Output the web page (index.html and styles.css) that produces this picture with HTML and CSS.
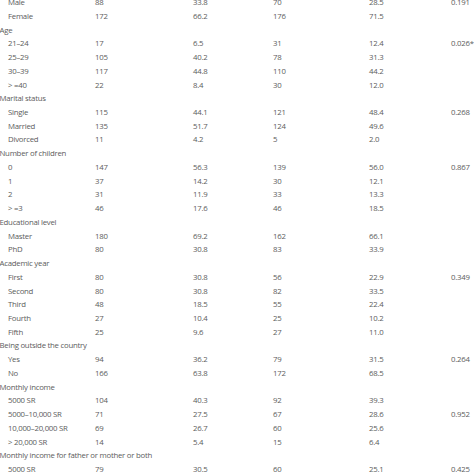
FILE: index.html
```html
<!DOCTYPE html>
<html>
<head>
<meta charset="utf-8">
<link rel="stylesheet" href="styles.css">
</head>
<body>
<div class="tbl">
  <div class="row"><span class="sub">Male</span><span>88</span><span>33.8</span><span>70</span><span>28.5</span><span>0.191</span></div>
  <div class="row"><span class="sub">Female</span><span>172</span><span>66.2</span><span>176</span><span>71.5</span><span></span></div>
  <div class="row cat"><span>Age</span></div>
  <div class="row"><span class="sub">21–24</span><span>17</span><span>6.5</span><span>31</span><span>12.4</span><span>0.026*</span></div>
  <div class="row"><span class="sub">25–29</span><span>105</span><span>40.2</span><span>78</span><span>31.3</span><span></span></div>
  <div class="row"><span class="sub">30–39</span><span>117</span><span>44.8</span><span>110</span><span>44.2</span><span></span></div>
  <div class="row"><span class="sub">&gt; =40</span><span>22</span><span>8.4</span><span>30</span><span>12.0</span><span></span></div>
  <div class="row cat"><span>Marital status</span></div>
  <div class="row"><span class="sub">Single</span><span>115</span><span>44.1</span><span>121</span><span>48.4</span><span>0.268</span></div>
  <div class="row"><span class="sub">Married</span><span>135</span><span>51.7</span><span>124</span><span>49.6</span><span></span></div>
  <div class="row"><span class="sub">Divorced</span><span>11</span><span>4.2</span><span>5</span><span>2.0</span><span></span></div>
  <div class="row cat"><span>Number of children</span></div>
  <div class="row"><span class="sub">0</span><span>147</span><span>56.3</span><span>139</span><span>56.0</span><span>0.867</span></div>
  <div class="row"><span class="sub">1</span><span>37</span><span>14.2</span><span>30</span><span>12.1</span><span></span></div>
  <div class="row"><span class="sub">2</span><span>31</span><span>11.9</span><span>33</span><span>13.3</span><span></span></div>
  <div class="row"><span class="sub">&gt; =3</span><span>46</span><span>17.6</span><span>46</span><span>18.5</span><span></span></div>
  <div class="row cat"><span>Educational level</span></div>
  <div class="row"><span class="sub">Master</span><span>180</span><span>69.2</span><span>162</span><span>66.1</span><span></span></div>
  <div class="row"><span class="sub">PhD</span><span>80</span><span>30.8</span><span>83</span><span>33.9</span><span></span></div>
  <div class="row cat"><span>Academic year</span></div>
  <div class="row"><span class="sub">First</span><span>80</span><span>30.8</span><span>56</span><span>22.9</span><span>0.349</span></div>
  <div class="row"><span class="sub">Second</span><span>80</span><span>30.8</span><span>82</span><span>33.5</span><span></span></div>
  <div class="row"><span class="sub">Third</span><span>48</span><span>18.5</span><span>55</span><span>22.4</span><span></span></div>
  <div class="row"><span class="sub">Fourth</span><span>27</span><span>10.4</span><span>25</span><span>10.2</span><span></span></div>
  <div class="row"><span class="sub">Fifth</span><span>25</span><span>9.6</span><span>27</span><span>11.0</span><span></span></div>
  <div class="row cat"><span>Being outside the country</span></div>
  <div class="row"><span class="sub">Yes</span><span>94</span><span>36.2</span><span>79</span><span>31.5</span><span>0.264</span></div>
  <div class="row"><span class="sub">No</span><span>166</span><span>63.8</span><span>172</span><span>68.5</span><span></span></div>
  <div class="row cat"><span>Monthly income</span></div>
  <div class="row"><span class="sub">5000 SR</span><span>104</span><span>40.3</span><span>92</span><span>39.3</span><span></span></div>
  <div class="row"><span class="sub">5000–10,000 SR</span><span>71</span><span>27.5</span><span>67</span><span>28.6</span><span>0.952</span></div>
  <div class="row"><span class="sub">10,000–20,000 SR</span><span>69</span><span>26.7</span><span>60</span><span>25.6</span><span></span></div>
  <div class="row"><span class="sub">&gt; 20,000 SR</span><span>14</span><span>5.4</span><span>15</span><span>6.4</span><span></span></div>
  <div class="row cat"><span>Monthly income for father or mother or both</span></div>
  <div class="row"><span class="sub">5000 SR</span><span>79</span><span>30.5</span><span>60</span><span>25.1</span><span>0.425</span></div>
</div>
</body>
</html>
```
FILE: styles.css
```css
html, body {
  margin: 0;
  padding: 0;
  background: #ffffff;
  overflow: hidden;
}
.tbl {
  margin-top: -3.9px;
  font-family: "Open Sans", "Noto Sans", sans-serif;
  font-size: 7.8px;
  letter-spacing: -0.25px;
  color: #5c5c5c;
}
.row {
  display: grid;
  grid-template-columns: 95px 98px 80px 96px 82px 1fr;
  height: 13.74px;
  align-items: center;
  white-space: nowrap;
}
.row span {
  line-height: 13.74px;
}
.row .sub {
  padding-left: 8px;
}
.row.cat {
  grid-template-columns: 1fr;
}
.row.cat span {
  margin-left: -0.5px;
}
```
